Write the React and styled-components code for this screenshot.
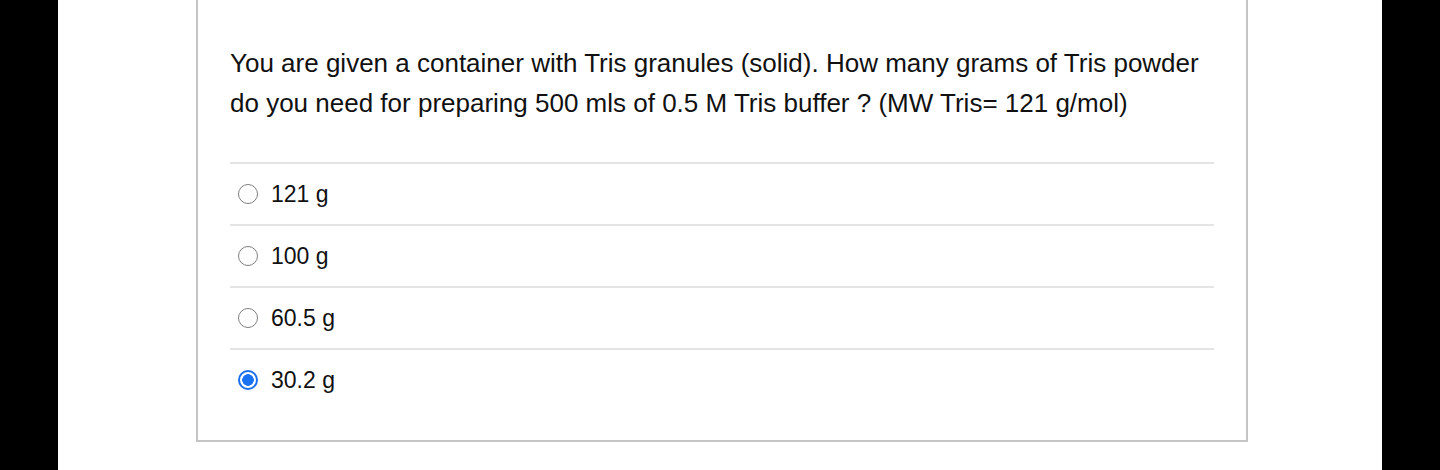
import React from "react";
import styled, { createGlobalStyle } from "styled-components";

const GlobalStyle = createGlobalStyle`
  html, body {
    margin: 0;
    padding: 0;
    background: #000;
    font-family: "Liberation Sans", Arial, sans-serif;
  }
`;

const Page = styled.div`
  display: flex;
  justify-content: center;
  height: 470px;
  overflow: hidden;
`;

const Sheet = styled.div`
  width: 1324px;
  background: #fff;
  padding-left: 138px;
  box-sizing: border-box;
`;

const Card = styled.div`
  width: 1052px;
  height: 442px;
  box-sizing: border-box;
  border: 2px solid #c4c4c4;
  border-top: none;
  padding: 43px 32px 0;
`;

const Question = styled.p`
  margin: 0 0 39px;
  font-size: 26px;
  line-height: 40px;
  color: #111;
`;

const Options = styled.ul`
  list-style: none;
  margin: 0;
  padding: 0;
`;

const Option = styled.li`
  display: flex;
  align-items: center;
  height: 60px;
  border-top: 2px solid #e4e4e4;
  padding-left: 8px;
  gap: 13px;
  font-size: 23px;
  color: #111;
`;

const Radio = styled.span`
  width: 20px;
  height: 20px;
  box-sizing: border-box;
  border-radius: 50%;
  flex-shrink: 0;
  border: ${(p) => (p.$checked ? "2px solid #1a6ff0" : "1.5px solid #808080")};
  background: ${(p) =>
    p.$checked
      ? "radial-gradient(circle, #1a73f5 0 5.5px, #fff 6px 100%)"
      : "#fff"};
`;

const options = [
  { label: "121 g" },
  { label: "100 g" },
  { label: "60.5 g" },
  { label: "30.2 g", checked: true },
];

export default function App() {
  return (
    <>
      <GlobalStyle />
      <Page>
        <Sheet>
          <Card>
            <Question>
              You are given a container with Tris granules (solid). How many
              grams of Tris powder do you need for preparing 500 mls of 0.5 M
              Tris buffer ? (MW Tris= 121 g/mol)
            </Question>
            <Options>
              {options.map((o) => (
                <Option key={o.label}>
                  <Radio $checked={o.checked} />
                  <span>{o.label}</span>
                </Option>
              ))}
            </Options>
          </Card>
        </Sheet>
      </Page>
    </>
  );
}
